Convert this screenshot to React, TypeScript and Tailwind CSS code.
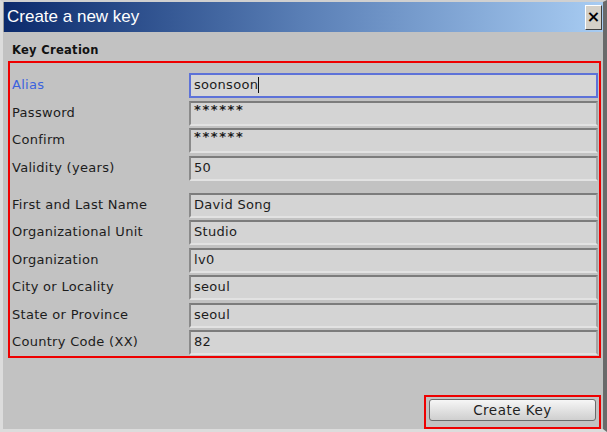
import React from "react";

const rowsA = [
  { label: "Alias", value: "soonsoon", active: true },
  { label: "Password", value: "******", stars: true },
  { label: "Confirm", value: "******", stars: true },
  { label: "Validity (years)", value: "50" },
];
const rowsB = [
  { label: "First and Last Name", value: "David Song" },
  { label: "Organizational Unit", value: "Studio" },
  { label: "Organization", value: "lv0" },
  { label: "City or Locality", value: "seoul" },
  { label: "State or Province", value: "seoul" },
  { label: "Country Code (XX)", value: "82" },
];

function Row({
  label,
  value,
  active,
  stars,
}: {
  label: string;
  value: string;
  active?: boolean;
  stars?: boolean;
}) {
  return (
    <div className="flex h-[25px] items-stretch">
      <div
        className={
          "w-[179px] shrink-0 pl-[2px] pt-[3px] text-[13px] leading-[17px] tracking-[0.3px] " +
          (active ? "text-[#3b62de]" : "text-[#1c1c1c]")
        }
      >
        {label}
      </div>
      {active ? (
        <div className="flex-1 border-2 border-[#5d72d8] bg-[#d6d6d6] pl-[3px] pt-[1px] text-[13px] leading-[17px] tracking-[0.3px] text-[#1c1c1c] flex items-start">
          <span>{value}</span>
          <span className="mt-[1px] h-[16px] w-px bg-[#111]" />
        </div>
      ) : stars ? (
        <div className="flex-1 border-2 border-t-[#7c7c7c] border-l-[#8a8a8a] border-r-[#a4a4a4] border-b-[#e2e2e2] bg-[#d4d4d4] pl-[3px] text-[13px] leading-[13px] font-bold tracking-[1.6px] text-[#1c1c1c]">
          {value}
        </div>
      ) : (
        <div className="flex-1 border-2 border-t-[#7c7c7c] border-l-[#8a8a8a] border-r-[#a4a4a4] border-b-[#e2e2e2] bg-[#d4d4d4] pl-[3px] pt-[1px] text-[13px] leading-[17px] tracking-[0.3px] text-[#1c1c1c]">
          {value}
        </div>
      )}
    </div>
  );
}

export default function App() {
  return (
    <div
      className="w-[607px] h-[432px] flex flex-col bg-[#c2c2c2] border-l-[3px] border-l-[#dcdcdc] border-r-[4px] border-r-[#6a6a6a] border-t-[2px] border-t-[#d0d0d0] border-b-[3px] border-b-[#dcdcdc] overflow-hidden"
      style={{ fontFamily: '"DejaVu Sans", Verdana, sans-serif' }}
    >
      <div className="h-[30px] shrink-0 flex items-center justify-between bg-gradient-to-r from-[#0c2a6c] via-[#5a7fb6] to-[#a8ccf2] border-l border-[#9a9a9a] pr-[1px]">
        <span
          className="pl-[3px] text-[17px] text-white"
          style={{ fontFamily: '"Liberation Sans", Arial, sans-serif' }}
        >
          Create a new key
        </span>
        <div className="w-[17px] h-[25px] flex items-center justify-center bg-[#d4d0c8] border border-t-[#ffffff] border-l-[#ffffff] border-r-[#404040] border-b-[#404040] text-[16px] font-bold leading-none text-black">
          ×
        </div>
      </div>

      <div className="flex-1 flex flex-col pl-[5px] pr-[2px]">
        <div className="pt-[10px] pl-[4px] h-[29px] text-[11.5px] font-bold leading-[16px] text-[#111] tracking-[0.3px]">
          Key Creation
        </div>
        <div className="border-2 border-[#ee0000] pt-[10px] pr-[1px] pb-[1px] flex flex-col">
          <div className="flex flex-col gap-[2.5px]">
            {rowsA.map((r) => (
              <Row key={r.label} {...r} />
            ))}
          </div>
          <div className="mt-[12px] flex flex-col gap-[2.5px]">
            {rowsB.map((r) => (
              <Row key={r.label} {...r} />
            ))}
          </div>
        </div>
        <div className="flex-1" />
        <div className="flex justify-end">
          <div className="border-2 border-[#ee0000] px-[3px] pt-[2px] pb-[6px]">
            <div className="w-[167px] h-[22px] rounded-[3px] border border-[#6a6a6a] bg-gradient-to-b from-[#f6f6f6] to-[#cfcfcf] flex items-center justify-center text-[13.5px] text-[#1f1f1f] tracking-[0.5px]">
              Create Key
            </div>
          </div>
        </div>
      </div>
    </div>
  );
}
